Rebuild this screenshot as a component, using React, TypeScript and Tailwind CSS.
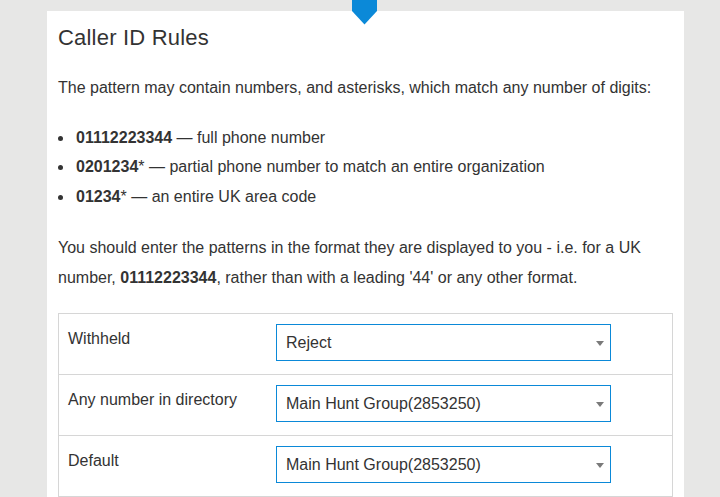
import React from "react";

const rules = [
  { pattern: "01112223344", star: false, text: "full phone number" },
  { pattern: "0201234", star: true, text: "partial phone number to match an entire organization" },
  { pattern: "01234", star: true, text: "an entire UK area code" },
];

const rows = [
  { label: "Withheld", value: "Reject" },
  { label: "Any number in directory", value: "Main Hunt Group(2853250)" },
  { label: "Default", value: "Main Hunt Group(2853250)" },
];

function Select({ value }: { value: string }) {
  return (
    <div className="mt-[10px] flex h-[37px] w-[335px] items-center justify-between border border-[#0b89d8] bg-white pl-[9px] pr-[6px] pt-[1px] text-[16px] text-[#333]">
      <span>{value}</span>
      <span className="h-0 w-0 border-x-4 border-t-[5px] border-x-transparent border-t-[#7a7a7a]" />
    </div>
  );
}

export default function App() {
  return (
    <div
      className="relative h-[497px] w-[720px] overflow-hidden bg-[#e7e7e6] text-[#333]"
      style={{ fontFamily: '"Liberation Sans", Arial, sans-serif' }}
    >
      {/* pointer marker */}
      <svg className="absolute left-[352px] top-0 z-10" width="25" height="25" viewBox="0 0 25 25">
        <polygon points="0,0 25,0 25,11 12.5,24.5 0,11" fill="#0b89d8" />
      </svg>

      <div className="ml-[47px] mt-[11px] h-[486px] w-[637px] bg-white px-[11px] pt-[14px]">
        <h2 className="text-[22px] leading-[26px] font-normal tracking-[0.2px]">Caller ID Rules</h2>

        <p className="mt-[22px] text-[16px] leading-[30px]">
          The pattern may contain numbers, and asterisks, which match any number of digits:
        </p>

        <ul className="mt-[20px] text-[16px] leading-[29.3px]">
          {rules.map((r) => (
            <li key={r.pattern} className="flex items-center">
              <span className="mr-[13px] h-[5px] w-[5px] translate-y-[1px] rounded-full bg-[#333]" />
              <span>
                <b className="font-bold">{r.pattern}</b>
                {r.star ? "*" : ""} — {r.text}
              </span>
            </li>
          ))}
        </ul>

        <p className="mt-[22px] text-[16px] leading-[30.6px]">
          You should enter the patterns in the format they are displayed to you - i.e. for a UK
          <br />
          number, <b className="font-bold">01112223344</b>, rather than with a leading '44' or any other format.
        </p>

        <div className="mt-[19px] w-[615px] border-x border-t border-[#d6d6d6]">
          {rows.map((row) => (
            <div key={row.label} className="flex h-[61px] border-b border-[#d6d6d6]">
              <div className="w-[207px] pl-[9px] pt-[10px] text-[16px] leading-[30px]">{row.label}</div>
              <div className="pl-[10px]">
                <Select value={row.value} />
              </div>
            </div>
          ))}
        </div>
      </div>
    </div>
  );
}
